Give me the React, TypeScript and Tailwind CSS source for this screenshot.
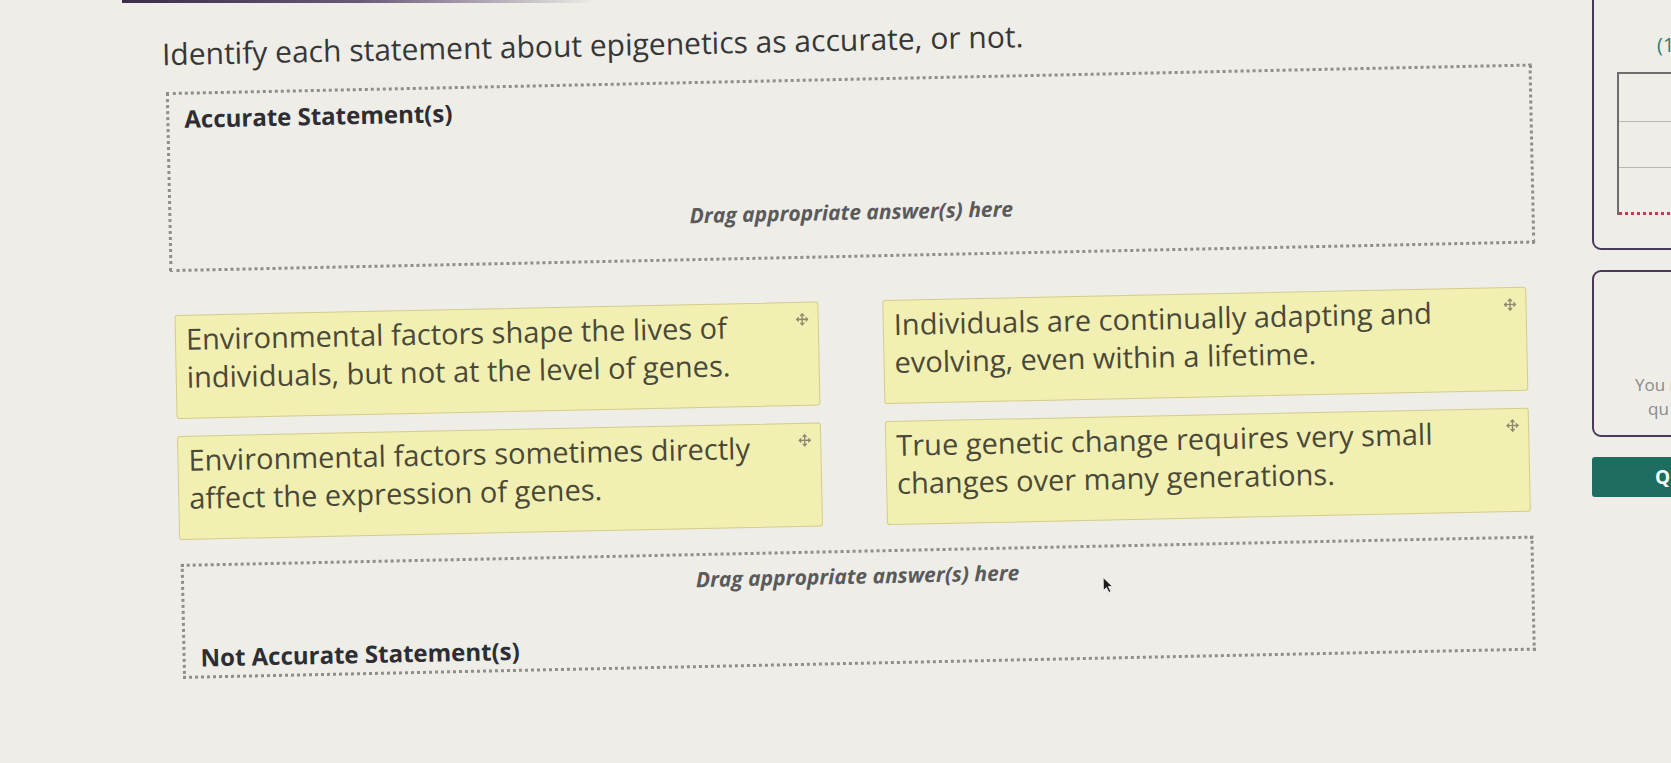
import { Move } from 'lucide-react';

const answers = [
  'Environmental factors shape the lives of individuals, but not at the level of genes.',
  'Individuals are continually adapting and evolving, even within a lifetime.',
  'Environmental factors sometimes directly affect the expression of genes.',
  'True genetic change requires very small changes over many generations.',
];

function AnswerCard({ text }: { text: string }) {
  return (
    <div className="relative rounded-[3px] border border-[#d3cd88] bg-[#f2efb3] pb-[22px] pl-[10px] pr-[40px] pt-[4px] text-[29px] leading-[38px] text-[#4a4937]">
      {text}
      <Move className="absolute right-[9px] top-[10px] h-[13px] w-[13px] text-[#8b8a6c]" strokeWidth={2.5} />
    </div>
  );
}

function Cursor() {
  return (
    <svg className="absolute left-[918px] top-[29px] h-[17px] w-[11px]" viewBox="0 0 11 17">
      <path d="M1 1 L1 14 L4 11 L6.5 16 L8.5 15 L6 10 L10 10 Z" fill="#1c1c1c" stroke="#f4f4f0" strokeWidth="0.8" />
    </svg>
  );
}

export default function App() {
  return (
    <div className="h-[763px] w-full overflow-hidden bg-[#eeede8] font-['Open_Sans',sans-serif]">
      {/* progress strip */}
      <div className="ml-[122px] h-[3px] w-[475px] bg-gradient-to-r from-[#3e2c4c] via-[#6a5878] to-transparent" />

      <div className="flex">
        <main className="h-[760px] w-[1592px] shrink-0 rotate-[-1.2deg] pl-[172px] pr-[54px] pt-[20px]">
          <h1 className="ml-[-3px] text-[30px] leading-[35px] text-[#373737]">
            Identify each statement about epigenetics as accurate, or not.
          </h1>

          {/* Accurate drop zone */}
          <section className="mt-[21px] border-[3px] border-dotted border-[#8e8e8e] pb-[30px] pl-[15px] pt-[10px]">
            <h2 className="text-[24px] font-bold leading-[28px] text-[#2d2d33]">Accurate Statement(s)</h2>
            <p className="mt-[80px] pr-[15px] text-center text-[21px] font-bold italic leading-[26px] text-[#5a5a5a]">
              Drag appropriate answer(s) here
            </p>
          </section>

          <div className="ml-[4px] mr-[10px] mt-[43px] grid grid-cols-2 gap-x-[64px] gap-y-[17px]">
            {answers.map((a) => (
              <AnswerCard key={a} text={a} />
            ))}
          </div>

          {/* Not accurate drop zone */}
          <section className="relative ml-[5px] mr-[8px] mt-[24px] border-[3px] border-dotted border-[#8e8e8e] pb-[4px] pl-[15px] pt-[10px]">
            <p className="pr-[15px] text-center text-[21px] font-bold italic leading-[26px] text-[#5a5a5a]">
              Drag appropriate answer(s) here
            </p>
            <h2 className="mt-[41px] text-[24px] font-bold leading-[28px] text-[#2d2d33]">Not Accurate Statement(s)</h2>
            <Cursor />
          </section>
        </main>

        <aside className="w-[320px] shrink-0">
          <div className="mt-[-25px] h-[272px] rounded-[9px] border-2 border-[#4a3a5a] pt-[53px]">
            <p className="pl-[63px] text-[20px] leading-[24px] text-[#2f7d74]">(1</p>
            <div className="ml-[23px] mt-[15px] border-l-2 border-t-2 border-[#6d6d6d]">
              <div className="h-[48px] border-b border-[#b9b9b4]" />
              <div className="h-[46px] border-b border-[#b9b9b4]" />
              <div className="h-[47px] border-b-[3px] border-dotted border-[#c23a4c]" />
            </div>
          </div>

          <div className="mt-[20px] h-[167px] rounded-[9px] border-2 border-[#4a3a5a] pt-[101px] text-[17px] leading-[24px] text-[#8a8a8a]">
            <p className="pl-[41px]">You m</p>
            <p className="pl-[54px]">qu</p>
          </div>

          <button className="mt-[20px] h-[40px] w-full rounded-[3px] bg-[#1d6d60] pl-[63px] text-left text-[19px] font-bold text-white">
            Q
          </button>
        </aside>
      </div>
    </div>
  );
}
